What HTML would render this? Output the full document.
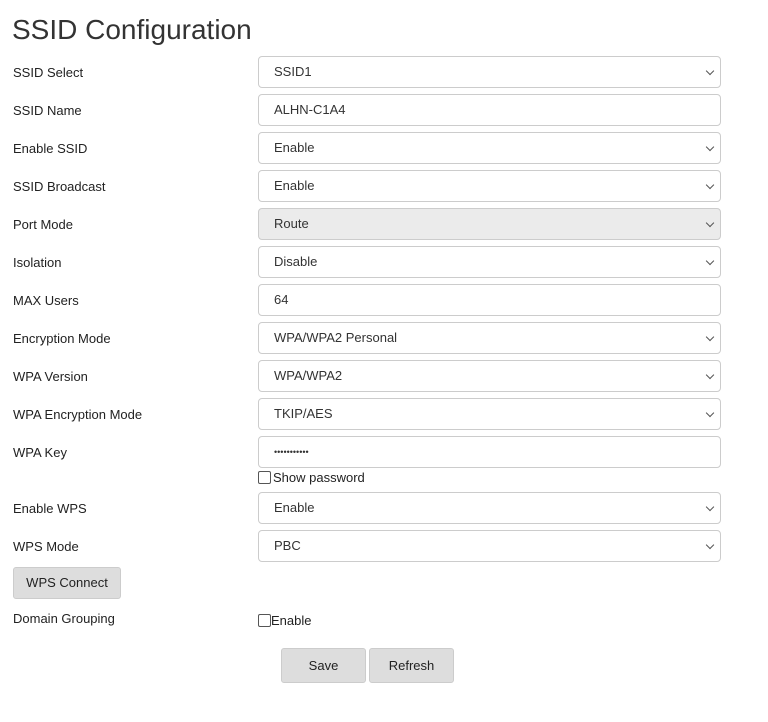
<!DOCTYPE html>
<html><head><style>
body{margin:0;background:#fff;font-family:"Liberation Sans",Arial,sans-serif;color:#222;width:768px;height:722px;position:relative;overflow:hidden}
h1{position:absolute;left:12px;top:14px;margin:0;font-size:28px;font-weight:normal;color:#333}
.l{position:absolute;left:13px;font-size:13px;color:#222}
.f{position:absolute;left:258px;width:461px;height:30px;border:1px solid #ccc;border-radius:4px;box-sizing:content-box;font-size:13px;line-height:30px;text-indent:15px;color:#333;background:#fff}
.f.g{background:#ebebeb}
.f.s::after{content:"";position:absolute;right:7px;top:11px;width:5px;height:5px;border-right:1.5px solid #555;border-bottom:1.5px solid #555;transform:rotate(45deg)}
.btn{position:absolute;background:#ddd;border:1px solid #ccc;border-radius:3px;font-size:13px;text-align:center;color:#222;box-sizing:border-box}
.cb{display:inline-block;width:11px;height:11px;border:1px solid #555;border-radius:2px;vertical-align:-2px;margin-right:2px}
</style></head><body>
<h1>SSID Configuration</h1>
<div class="l" style="top:65px">SSID Select</div><div class="f s" style="top:56px">SSID1</div>
<div class="l" style="top:103px">SSID Name</div><div class="f" style="top:94px">ALHN-C1A4</div>
<div class="l" style="top:141px">Enable SSID</div><div class="f s" style="top:132px">Enable</div>
<div class="l" style="top:179px">SSID Broadcast</div><div class="f s" style="top:170px">Enable</div>
<div class="l" style="top:217px">Port Mode</div><div class="f s g" style="top:208px">Route</div>
<div class="l" style="top:255px">Isolation</div><div class="f s" style="top:246px">Disable</div>
<div class="l" style="top:293px">MAX Users</div><div class="f" style="top:284px">64</div>
<div class="l" style="top:331px">Encryption Mode</div><div class="f s" style="top:322px">WPA/WPA2 Personal</div>
<div class="l" style="top:369px">WPA Version</div><div class="f s" style="top:360px">WPA/WPA2</div>
<div class="l" style="top:407px">WPA Encryption Mode</div><div class="f s" style="top:398px">TKIP/AES</div>
<div class="l" style="top:445px">WPA Key</div><div class="f" style="top:436px;font-size:9px">•••••••••••</div>
<div class="l" style="top:470px;left:258px"><span class="cb"></span>Show password</div>
<div class="l" style="top:501px">Enable WPS</div><div class="f s" style="top:492px">Enable</div>
<div class="l" style="top:539px">WPS Mode</div><div class="f s" style="top:530px">PBC</div>
<div class="btn" style="left:13px;top:567px;width:108px;height:32px;line-height:30px">WPS Connect</div>
<div class="l" style="top:611px">Domain Grouping</div>
<div class="l" style="top:613px;left:258px"><span class="cb" style="margin-right:0"></span>Enable</div>
<div class="btn" style="left:281px;top:648px;width:85px;height:35px;line-height:33px">Save</div>
<div class="btn" style="left:369px;top:648px;width:85px;height:35px;line-height:33px">Refresh</div>
</body></html>
